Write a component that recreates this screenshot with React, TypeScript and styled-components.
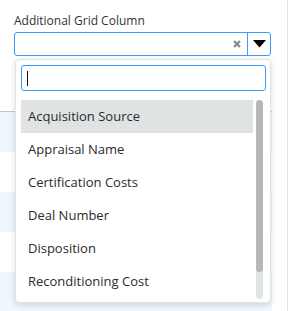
import React from "react";
import styled, { createGlobalStyle } from "styled-components";

const GlobalStyle = createGlobalStyle`
  html, body {
    margin: 0;
    padding: 0;
    background: #fff;
    font-family: "Open Sans", "Liberation Sans", sans-serif;
    color: #333;
  }
`;

const Page = styled.div`
  position: relative;
  width: 287px;
  height: 311px;
  border-right: 1px solid #e4e4e4;
  overflow: hidden;
`;

const Field = styled.div`
  padding: 12px 16px 0 14px;
`;

const Label = styled.div`
  font-size: 12px;
  line-height: 17px;
  color: #333;
  margin-bottom: 3px;
`;

const SelectBox = styled.div`
  display: flex;
  align-items: center;
  height: 22px;
  border: 1px solid #3b99fc;
  border-radius: 3px;
  background: #fff;
`;

const SelectValue = styled.div`
  flex: 1;
`;

const Clear = styled.span`
  display: flex;
  align-items: center;
  justify-content: center;
  width: 18px;
  height: 22px;
  margin-right: 1px;
`;

const Caret = styled.div`
  display: flex;
  align-items: center;
  justify-content: center;
  width: 22px;
  height: 22px;
  border-left: 1px solid #3b99fc;
`;

const Table = styled.div`
  margin-top: 55px;
  width: 272px;
  border-top: 1px solid #c4c4c4;
`;

const Row = styled.div<{ $striped: boolean }>`
  height: 40px;
  background: ${(p) => (p.$striped ? "#eef6fe" : "#fff")};
`;

const Dropdown = styled.div`
  position: absolute;
  left: 15px;
  top: 59px;
  width: 256px;
  height: 244px;
  box-sizing: border-box;
  background: #fff;
  border: 1px solid #e2e2e2;
  border-radius: 4px;
  box-shadow: 0 2px 6px rgba(0, 0, 0, 0.14);
  padding: 5px 4px 0 5px;
`;

const Search = styled.div`
  display: flex;
  align-items: center;
  height: 24px;
  border: 1px solid #3b99fc;
  border-radius: 3px;
  padding-left: 5px;
`;

const Cursor = styled.span`
  width: 1px;
  height: 15px;
  background: #111;
`;

const ListArea = styled.div`
  display: flex;
  margin-top: 9px;
`;

const List = styled.div`
  flex: 1;
`;

const Item = styled.div<{ $active?: boolean }>`
  height: 33px;
  line-height: 33px;
  padding-left: 7px;
  font-size: 13px;
  color: #2b2b2b;
  background: ${(p) => (p.$active ? "#dfe3e3" : "transparent")};
`;

const Scrollbar = styled.div`
  width: 7px;
  height: 199px;
  margin: 0 3px;
  background: #dfe3e3;
  border-radius: 4px;
  display: flex;
`;

const Thumb = styled.div`
  width: 7px;
  height: 172px;
  background: #b7b7b7;
  border-radius: 4px;
`;

const items = [
  "Acquisition Source",
  "Appraisal Name",
  "Certification Costs",
  "Deal Number",
  "Disposition",
  "Reconditioning Cost",
];

export default function App() {
  return (
    <Page>
      <GlobalStyle />
      <Field>
        <Label>Additional Grid Column</Label>
        <SelectBox>
          <SelectValue />
          <Clear>
            <svg width="8" height="8" viewBox="0 0 8 8">
              <path d="M1 1 L7 7 M7 1 L1 7" stroke="#8a8a8a" strokeWidth="2.2" />
            </svg>
          </Clear>
          <Caret>
            <svg width="13" height="8" viewBox="0 0 13 8">
              <path d="M0 0 H13 L6.5 7.5 Z" fill="#000" />
            </svg>
          </Caret>
        </SelectBox>
      </Field>
      <Table>
        {[0, 1, 2, 3, 4].map((i) => (
          <Row key={i} $striped={i % 2 === 0} />
        ))}
      </Table>
      <Dropdown>
        <Search>
          <Cursor />
        </Search>
        <ListArea>
          <List>
            {items.map((it, i) => (
              <Item key={it} $active={i === 0}>
                {it}
              </Item>
            ))}
          </List>
          <Scrollbar>
            <Thumb />
          </Scrollbar>
        </ListArea>
      </Dropdown>
    </Page>
  );
}
